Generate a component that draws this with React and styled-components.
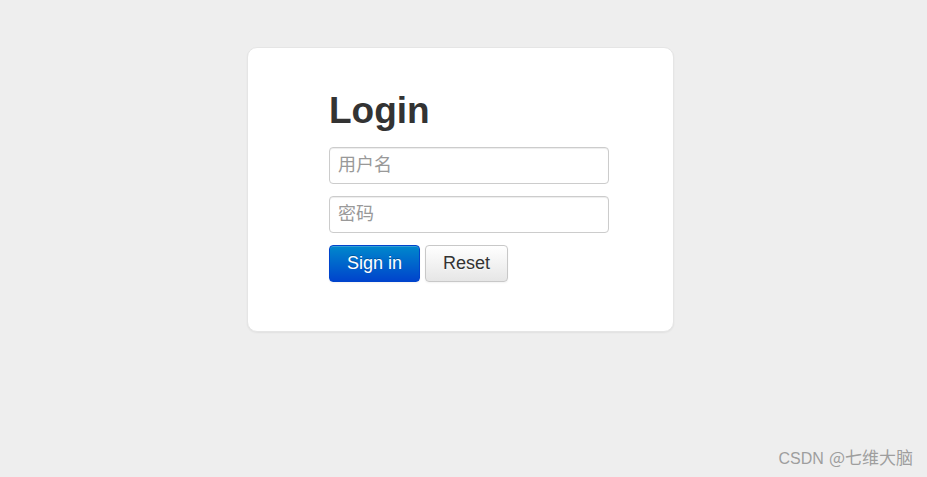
import React from 'react';
import styled, { createGlobalStyle } from 'styled-components';

const GlobalStyle = createGlobalStyle`
  html, body {
    margin: 0;
    padding: 0;
  }
  body {
    background: #eeeeee;
    font-family: "Liberation Sans", Arial, "Noto Sans CJK SC", sans-serif;
  }
`;

const Page = styled.div`
  min-height: 100vh;
  box-sizing: border-box;
  padding-top: 47px;
  padding-left: 247px;
`;

const Card = styled.form`
  box-sizing: border-box;
  width: 427px;
  padding: 44px 64px 49px 81px;
  background: #fff;
  border: 1px solid #e5e5e5;
  border-radius: 10px;
  box-shadow: 0 1px 2px rgba(0, 0, 0, 0.06);
  display: flex;
  flex-direction: column;
`;

const Heading = styled.h2`
  margin: -1px 0 16px;
  font-size: 37px;
  line-height: 40px;
  font-weight: bold;
  color: #333;
`;

const Field = styled.input`
  box-sizing: border-box;
  width: 280px;
  height: 37px;
  margin: 0 0 12px;
  padding: 0 8px;
  border: 1px solid #ccc;
  border-radius: 4px;
  box-shadow: inset 0 1px 1px rgba(0, 0, 0, 0.075);
  font-size: 18px;
  font-family: "Liberation Sans", "Noto Sans CJK SC", sans-serif;
  color: #555;
  outline: none;

  &::placeholder {
    color: #999;
  }
`;

const Actions = styled.div`
  display: flex;
  gap: 5px;
`;

const Button = styled.button`
  box-sizing: border-box;
  height: 37px;
  padding: 0 17px;
  border-radius: 4px;
  font-size: 18px;
  font-family: "Liberation Sans", Arial, sans-serif;
  cursor: pointer;
  border: 1px solid ${p => (p.$primary ? '#0044cc' : '#c8c8c8')};
  color: ${p => (p.$primary ? '#fff' : '#333')};
  background: ${p =>
    p.$primary
      ? 'linear-gradient(to bottom, #0088cc, #0044cc)'
      : 'linear-gradient(to bottom, #ffffff, #e6e6e6)'};
  text-shadow: ${p =>
    p.$primary ? '0 -1px 0 rgba(0,0,0,0.25)' : '0 1px 1px rgba(255,255,255,0.75)'};
  box-shadow: inset 0 1px 0 rgba(255, 255, 255, 0.2), 0 1px 2px rgba(0, 0, 0, 0.05);
`;

const Watermark = styled.div`
  position: absolute;
  right: 14px;
  bottom: 8px;
  color: #9e9e9e;
  display: flex;
  align-items: baseline;
  gap: 5px;
`;

const Mark = styled.span`
  font-family: "Liberation Sans", Arial, sans-serif;
  font-size: 16px;
`;

const MarkCjk = styled.span`
  font-family: "Noto Sans CJK SC", sans-serif;
  font-size: 17px;
`;

export default function App() {
  return (
    <>
      <GlobalStyle />
      <Page>
        <Card onSubmit={e => e.preventDefault()}>
          <Heading>Login</Heading>
          <Field type="text" placeholder="用户名" />
          <Field type="password" placeholder="密码" />
          <Actions>
            <Button type="submit" $primary>Sign in</Button>
            <Button type="reset">Reset</Button>
          </Actions>
        </Card>
      </Page>
      <Watermark>
        <Mark>CSDN</Mark>
        <MarkCjk>@七维大脑</MarkCjk>
      </Watermark>
    </>
  );
}
